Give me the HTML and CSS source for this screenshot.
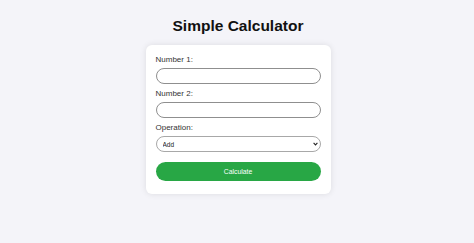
FILE: index.html
```html
<!DOCTYPE html>
<html lang="en">
<head>
<meta charset="utf-8">
<title>Simple Calculator</title>
<link rel="stylesheet" href="styles.css">
</head>
<body>
<main class="page">
  <h1 class="title">Simple Calculator</h1>
  <form class="card">
    <label class="field-label" for="n1">Number 1:</label>
    <input class="field-input" id="n1" type="number">
    <label class="field-label" for="n2">Number 2:</label>
    <input class="field-input" id="n2" type="number">
    <label class="field-label" for="op">Operation:</label>
    <div class="select-wrap">
      <select class="field-select" id="op">
        <option>Add</option>
        <option>Subtract</option>
        <option>Multiply</option>
        <option>Divide</option>
      </select>
      <svg class="chevron" width="5" height="4" viewBox="0 0 5 4" aria-hidden="true">
        <path d="M0.6 0.9 L2.5 2.9 L4.4 0.9" fill="none" stroke="#222" stroke-width="1.1"/>
      </svg>
    </div>
    <button class="calc-btn" type="button">Calculate</button>
  </form>
</main>
</body>
</html>
```
FILE: styles.css
```css
html, body {
  margin: 0;
  padding: 0;
}
body {
  background: #f4f4f9;
  font-family: "Liberation Sans", Arial, sans-serif;
  color: #111;
  width: 474px;
  height: 243px;
}
.page {
  display: flex;
  flex-direction: column;
  align-items: center;
  padding-top: 17px;
  padding-left: 2px;
}
.title {
  margin: 0 0 10px 0;
  font-size: 15.5px;
  line-height: 18px;
  font-weight: bold;
  color: #111;
}
.card {
  width: 165px;
  padding: 10px 10px 13px 10px;
  background: #fff;
  border-radius: 6px;
  box-shadow: 0 0 6px rgba(0,0,0,0.1);
  display: flex;
  flex-direction: column;
}
.field-label {
  font-size: 8px;
  line-height: 10px;
  color: #333;
  margin: 0 0 3px 0;
}
.field-input, .field-select {
  box-sizing: border-box;
  width: 100%;
  height: 16px;
  margin: 0 0 5px 0;
  border: 1px solid #8f8f8f;
  border-radius: 8px;
  background: #fff;
  font-family: "Liberation Sans", Arial, sans-serif;
  font-size: 6.5px;
  padding: 0 6px;
}
.select-wrap {
  position: relative;
  margin-bottom: 10px;
}
.field-select {
  display: block;
  appearance: none;
  -webkit-appearance: none;
  border-color: #a8a8a8;
  color: #222;
  margin: 0;
}
.chevron {
  position: absolute;
  right: 3px;
  top: 6px;
  pointer-events: none;
}
.calc-btn {
  height: 19px;
  border: none;
  border-radius: 10px;
  background: #28a745;
  color: #fff;
  font-family: "Liberation Sans", Arial, sans-serif;
  font-size: 6.8px;
  padding: 0;
}
```
